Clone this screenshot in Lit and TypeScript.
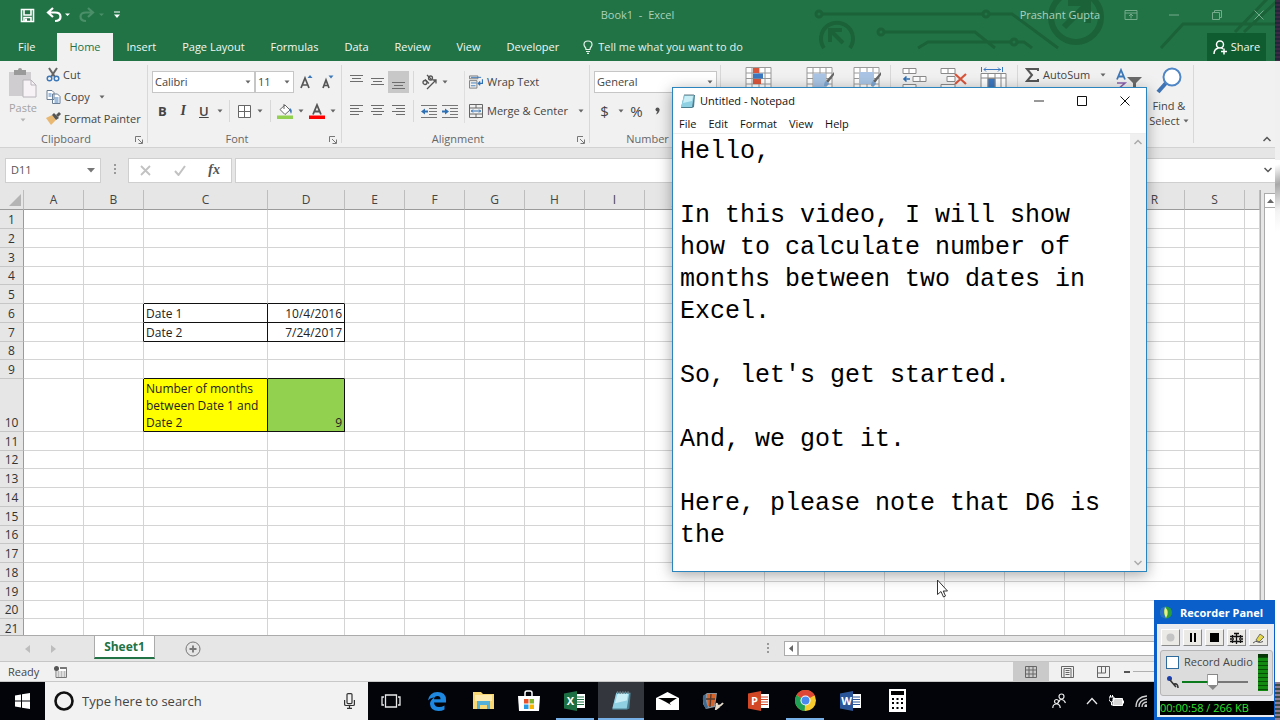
import { LitElement, html, css, svg, nothing } from "lit";
import { customElement } from "lit/decorators.js";
import { classMap } from "lit/directives/class-map.js";

const base = css`
  *, *::before, *::after { box-sizing: border-box; }
  :host { font-family: "Open Sans", "Noto Sans", sans-serif; font-size: 11px; line-height: 16px; color: #444; }
  button, input, select, textarea { font: inherit; color: inherit; border: 0; background: none; padding: 0; margin: 0; outline: 0; border-radius: 0; }
  button { display: inline-flex; align-items: center; justify-content: center; white-space: nowrap; }
  select { appearance: none; }
  svg { display: block; flex: none; }
`;

const caret = (c = "#666") => html`<svg width="6" height="4" viewBox="0 0 6 4"><path d="M0.5 0.5h5L3 3.6z" fill=${c} /></svg>`;

/* ---------- title bar and ribbon tabs ---------- */

@customElement("excel-header")
class ExcelHeader extends LitElement {
  static styles = [base, css`
    :host { display: block; position: relative; background: #217346; height: 61px; color: #f2f8f4; overflow: hidden; }
    .art { position: absolute; top: 0; right: 0; }
    .bar { display: grid; grid-template-columns: 1fr auto 1fr; height: 30px; align-items: center; position: relative; color: #a9d2ba; }
    .quick { display: flex; align-items: center; padding-left: 20px; gap: 8px; }
    .win { display: flex; justify-content: flex-end; align-items: center; }
    .win button { width: 43px; height: 28px; color: #74ab8b; }
    .win .close { width: 37px; padding-left: 5px; }
    .user { margin-right: 9px; }
    .tabs { display: flex; align-items: stretch; position: relative; height: 31px; padding: 3px 9px 0 5px; }
    .tab { padding: 0 13px; }
    .tab.file { padding: 0 22px 0 13px; }
    .tab.on { background: #f1f1f1; color: #217346; padding: 0 12px; margin-right: 1px; }
    .tell { display: flex; align-items: center; gap: 5px; flex: 1; margin-left: 11px; }
    .tell input { width: 180px; }
    .tell input::placeholder { color: #e4f2ea; opacity: 1; }
    .share { width: 59px; background: #0e5c2f; gap: 4px; }
  `];
  render() {
    return html`
      <svg class="art" width="480" height="50" viewBox="795 0 480 50" fill="none" stroke="#1b6239" stroke-width="3">
        <circle cx="819" cy="14" r="3" /><path d="M823 14H982M990 14h22l46 34" /><circle cx="986" cy="14" r="3" />
        <circle cx="881" cy="32" r="3" /><path d="M885 32h90l20 16M918 48l10-6h82M1018 42h6l8 6" /><circle cx="1014" cy="42" r="3" />
        <path d="M824 48a16 16 0 1 1 26 0" stroke-width="4" /><path d="M843 43L831 31M830 42V30h12" stroke-width="4" />
        <circle cx="1076" cy="17" r="25" stroke-width="6" /><path d="M1064 27l22-22M1068 3h20v20" stroke-width="6" />
        <path d="M1161 48l22-24h92M1235 32l33-34M1244 32l32-30" />
      </svg>
      <div class="bar">
        <div class="quick">
          <button aria-label="Save"><svg width="15" height="15" viewBox="0 0 15 15" fill="none" stroke="#fff" stroke-width="1.6"><path d="M1.5 1.5h12v12h-12zM4 2v5h7V2M4 13.5v-4h7v4" /><path d="M5 12h2" stroke-width="3"/></svg></button>
          <button aria-label="Undo"><svg width="28" height="16" viewBox="0 0 28 16"><path d="M10 1L5 5.5l5 4.500M5.500 5.500H12q5.500 0 5.500 4.300Q17.500 14 12 14" fill="none" stroke="#fff" stroke-width="2.200"/><path d="M22 6.500h5L24.500 9z" fill="#fff"/></svg></button>
          <button aria-label="Redo"><svg width="26" height="16" viewBox="0 0 26 16"><path d="M9 1l5 4.500L9 10M13.500 5.500H7Q1.500 5.500 1.500 9.800 1.500 14 7 14" fill="none" stroke="#4b8f69" stroke-width="2.200"/><path d="M20 6.500h5L22.500 9z" fill="#4b8f69"/></svg></button>
          <button aria-label="Customize toolbar"><svg width="8" height="8" viewBox="0 0 8 8"><path d="M1 1h6" stroke="#fff" /><path d="M1 3.500h6L4 7z" fill="#fff"/></svg></button>
        </div>
        <div>Book1 &nbsp;- &nbsp;Excel</div>
        <div class="win">
          <span class="user">Prashant Gupta</span>
          <button aria-label="Ribbon display options"><svg width="14" height="11" viewBox="0 0 14 11" fill="none" stroke="currentColor"><path d="M1 .5h12v9H1zM1 3h12M7 8.500V4.500M5 6l2-2 2 2" /></svg></button>
          <button aria-label="Minimize"><svg width="10" height="2"><path d="M0 1h10" stroke="currentColor"/></svg></button>
          <button aria-label="Restore"><svg width="10" height="10" viewBox="0 0 10 10" fill="none" stroke="currentColor"><path d="M.5 2.500h7v7h-7zM2.500 2.500v-2h7v7h-2"/></svg></button>
          <button class="close" aria-label="Close"><svg width="10" height="10" viewBox="0 0 10 10" stroke="currentColor"><path d="M.5.5l9 9m0-9l-9 9"/></svg></button>
        </div>
      </div>
      <div class="tabs">
        <button class="tab file">File</button>
        <button class="tab on">Home</button>
        ${["Insert", "Page Layout", "Formulas", "Data", "Review", "View", "Developer"].map((t) => html`<button class="tab">${t}</button>`)}
        <label class="tell">
          <svg width="10" height="14" viewBox="0 0 10 14" fill="none" stroke="#e4f2ea" stroke-width="1.200"><path d="M3 9.500Q3 8 2 7 1 6 1 4.600 1 1 5 1t4 3.600Q9 6 8 7 7 8 7 9.500zM3 11.500h4M4 13.300h2" /></svg>
          <input placeholder="Tell me what you want to do" aria-label="Tell me what you want to do" />
        </label>
        <button class="share"><svg width="14" height="15" viewBox="0 0 14 15" fill="none" stroke="#fff" stroke-width="1.500"><circle cx="7" cy="4.500" r="3.500"/><path d="M1 14q0-5 4.500-6M8.500 8l1.500 1M11 8.500v6M8 11.500h6"/></svg>Share</button>
      </div>`;
  }
}

/* ---------- ribbon ---------- */

const bars = (y: number[], w: number[], mode: string) => svg`${y.map((v, i) => {
  const x = mode === "l" ? 1 : mode === "r" ? 14 - w[i] : 7.5 - w[i] / 2;
  return svg`<path d=${`M${x} ${v}h${w[i]}`} stroke="#6d6d6d"/>`;
})}`;
const lines = (y: number[], w: number[], mode = "c") => html`<svg width="15" height="16" viewBox="0 0 15 16">${bars(y, w, mode)}</svg>`;
const tableIcon = (inner: unknown) => html`<svg width="28" height="24" viewBox="0 0 28 24"><path d="M1 1.500h25v21H1zM1 7h25M1 12.500h25M1 18h25M7 1v21M14 1v21M20 1v21" fill="#fff" stroke="#9a9a9a"/>${inner}</svg>`;
const brush = svg`<path d="M28 6l-8 9 2 2 6-8z" fill="#666"/><path d="M20 15q-2 1-2 5 4 1 5-3z" fill="#7fa6cf"/>`;

@customElement("excel-ribbon")
class ExcelRibbon extends LitElement {
  static styles = [base, css`
    :host { display: flex; height: 87px; background: #f1f1f1; border-bottom: 1px solid #d2d2d2; overflow: hidden; }
    .group { position: relative; flex: none; display: flex; flex-direction: column; }
    .group::after { content: ""; position: absolute; right: 0; top: 4px; bottom: 4px; border-right: 1px solid #d8d8d8; }
    .clip { width: 148px; } .font { width: 194px; } .align { width: 248px; } .num { width: 131px; }
    .styles { width: 170px; } .cells { width: 127px; } .edit { width: 176px; }
    .label { display: flex; justify-content: center; align-items: center; margin-top: auto; padding-right: 16px; color: #666; position: relative; }
    .label svg { position: absolute; right: 4px; top: 5px; }
    .grow { flex: 1; display: flex; justify-content: flex-end; align-items: flex-end; padding: 0 4px 5px; }
    .cols { display: flex; }
    .paste { flex-direction: column; justify-content: flex-start; width: 46px; padding-top: 7px; color: #a3a3a3; gap: 2px; }
    .stack { display: flex; flex-direction: column; gap: 1px; padding-top: 3px; align-items: flex-start; }
    .stack button { height: 21px; gap: 3px; }
    .rows { display: flex; flex-direction: column; gap: 7px; padding: 10px 4px 0; }
    .row { display: flex; height: 22px; align-items: center; }
    .ib { width: 21px; height: 22px; }
    .ar { width: 11px; height: 22px; }
    .on { background: #c8c8c8; }
    .sep { width: 1px; height: 22px; background: #d8d8d8; margin: 0 4px; }
    .tall { width: 1px; background: #dedede; margin-top: 10px; height: 52px; }
    .combo { position: relative; height: 22px; border: 1px solid #c6c6c6; background: #fff; display: flex; align-items: center; }
    .combo select { width: 100%; height: 20px; padding-left: 2px; }
    .combo svg { position: absolute; right: 3px; top: 8px; pointer-events: none; }
    .face { width: 104px; } .size { width: 40px; margin-right: 2px; } .fmt { width: 124px; }
    .txt { height: 22px; gap: 4px; justify-content: flex-start; }
    .b { font-weight: 700; font-size: 13px; color: #444; }
    .i { font-style: italic; font-weight: 700; font-family: "Liberation Serif", serif; font-size: 14px; }
    .u { text-decoration: underline; font-weight: 600; font-size: 13px; }
    .sym { font-size: 15px; }
    .tops { display: flex; padding: 5px 0 0; align-items: flex-start; }
    .tops.s { padding-left: 24px; gap: 19px; }
    .tops .first { margin-right: 14px; }
    .tops.c { padding-left: 10px; gap: 12px; }
    .autosum { gap: 4px; height: 20px; }
    .editing { display: flex; align-items: flex-start; padding: 4px 0 0 7px; }
    .sort { margin: 3px 0 0 8px; width: 30px; }
    .find { flex-direction: column; width: 50px; padding-top: 2px; }
    .find svg { margin-bottom: 3px; }
    .find span { display: flex; align-items: center; gap: 3px; line-height: 15px; }
    .find span svg { margin: 0; }
  `];
  launcher = html`<svg width="9" height="9" viewBox="0 0 9 9" fill="none" stroke="#777"><path d="M.5 6V.5H6M3 3l4 4M7.500 3.500v4h-4"/></svg>`;
  ar() { return html`<button class="ar" aria-label="More">${caret()}</button>`; }
  render() {
    return html`
      <section class="group clip">
        <div class="cols">
          <button class="paste">
            <svg width="28" height="30" viewBox="0 0 28 30"><path d="M0 4h22v24H0z" fill="#cfcdd0"/><path d="M5 2h12v5H5z" fill="#9a9a9a"/><circle cx="11" cy="2" r="2" fill="#9a9a9a"/><path d="M14 12h8l5 5v12H14z" fill="#f6f2f6" stroke="#b9b4ba"/><path d="M22 12v5h5" fill="none" stroke="#b9b4ba"/></svg>
            Paste ${caret("#b5b5b5")}
          </button>
          <div class="stack">
            <button><svg width="14" height="15" viewBox="0 0 14 15" fill="none"><path d="M3 1l6 9M11 1L5 10" stroke="#666" stroke-width="2"/><circle cx="3.500" cy="11.500" r="2.300" stroke="#3c78b8" stroke-width="1.400"/><circle cx="10.500" cy="11.500" r="2.300" stroke="#3c78b8" stroke-width="1.400"/></svg>Cut</button>
            <button><svg width="15" height="14" viewBox="0 0 15 14" fill="#fff" stroke="#6a7f95"><path d="M1 .5h5l2 2v7H1zM6.500 4h5l2.500 2.500v7H6.500z"/><path d="M2.500 4h3M2.500 6h3M8.500 8h4M8.500 10h4M8.500 12h4" stroke="#3c78b8"/></svg>Copy &nbsp; ${caret()}</button>
            <button><svg width="15" height="13" viewBox="0 0 15 13"><path d="M0 6l6-3 4 5-5 5z" fill="#e9b872"/><path d="M6 3l2-2 5 5-3 2z" fill="#555"/><path d="M10 3l3-3 2 2-3 3z" fill="#555"/></svg>Format Painter</button>
          </div>
        </div>
        <div class="label">Clipboard ${this.launcher}</div>
      </section>

      <section class="group font">
        <div class="rows">
          <div class="row">
            <span class="combo face"><select aria-label="Font"><option>Calibri</option></select>${caret()}</span>
            <span class="combo size"><select aria-label="Font size"><option>11</option></select>${caret()}</span>
            <button class="ib" aria-label="Increase font size"><svg width="15" height="16" viewBox="0 0 15 16"><path d="M2 14L6 4l4 10M3.500 11h5" fill="none" stroke="#555" stroke-width="1.700"/><path d="M8.500 4h5L11 1z" fill="#3c78b8"/></svg></button>
            <button class="ib" aria-label="Decrease font size"><svg width="15" height="16" viewBox="0 0 15 16"><path d="M3 14l3-8 3 8M4 11.500h4" fill="none" stroke="#555" stroke-width="1.700"/><path d="M8.500 1.500h5L11 4.500z" fill="#3c78b8"/></svg></button>
          </div>
          <div class="row">
            <button class="ib b">B</button><button class="ib i">I</button><button class="ib u">U</button>${this.ar()}<span class="sep"></span>
            <button class="ib" aria-label="Borders"><svg width="13" height="13" viewBox="0 0 13 13" fill="#fff" stroke="#666"><path d="M.5.5h12v12H.5zM6.500 0v13M0 6.500h13"/></svg></button>${this.ar()}<span class="sep"></span>
            <button class="ib" aria-label="Fill colour"><svg width="16" height="16" viewBox="0 0 16 16"><path d="M3 6.500L8 2l5 5-5 4.500z" fill="#fff" stroke="#666"/><path d="M7 1v5" stroke="#666"/><path d="M13 5q3 2 1 6-1-3-2-4z" fill="#3c78b8"/><path d="M0 12.500h16V16H0z" fill="#92d050"/></svg></button>${this.ar()}
            <button class="ib" aria-label="Font colour"><svg width="16" height="16" viewBox="0 0 16 16"><path d="M4 11.500L8 2l4 9.500M5.500 8.500h5" fill="none" stroke="#555" stroke-width="1.800"/><path d="M0 12.500h16V16H0z" fill="#f00"/></svg></button>${this.ar()}
          </div>
        </div>
        <div class="label">Font ${this.launcher}</div>
      </section>

      <section class="group align">
        <div class="cols">
          <div class="rows">
            <div class="row">
              <button class="ib" aria-label="Top align">${lines([1.5, 4.5, 7.5], [13, 9, 13])}</button>
              <button class="ib" aria-label="Middle align">${lines([4.5, 7.5, 10.5], [13, 9, 13])}</button>
              <button class="ib on" aria-label="Bottom align">${lines([8.5, 11.5, 14.5], [13, 9, 13])}</button><span class="sep"></span>
              <button class="ib" aria-label="Orientation"><svg width="16" height="16" viewBox="0 0 16 16" fill="none" stroke="#555" stroke-width="1.300"><path d="M6 15L15 6M11.500 6H15v3.500" /><circle cx="4" cy="8.500" r="2"/><path d="M4 5.500l4 4M6 1l5 5"/><circle cx="9.500" cy="4" r="2"/></svg></button>${this.ar()}
            </div>
            <div class="row">
              <button class="ib" aria-label="Align left">${lines([2.5, 5.5, 8.5, 11.5], [13, 9, 13, 9], "l")}</button>
              <button class="ib" aria-label="Center">${lines([2.5, 5.5, 8.5, 11.5], [13, 9, 13, 9])}</button>
              <button class="ib" aria-label="Align right">${lines([2.5, 5.5, 8.5, 11.5], [13, 9, 13, 9], "r")}</button><span class="sep"></span>
              <button class="ib" aria-label="Decrease indent"><svg width="16" height="13" viewBox="0 0 16 13"><path d="M0 .5h16M8 3.500h8M8 6.500h8M8 9.500h8M0 12.500h16" stroke="#777"/><path d="M0 6.500l4-3v2h3v2H4v2z" fill="#2f6fb3"/></svg></button>
              <button class="ib" aria-label="Increase indent"><svg width="16" height="13" viewBox="0 0 16 13"><path d="M0 .5h16M8 3.500h8M8 6.500h8M8 9.500h8M0 12.500h16" stroke="#777"/><path d="M7 6.500l-4-3v2H0v2h3v2z" fill="#2f6fb3"/></svg></button>
            </div>
          </div>
          <span class="tall"></span>
          <div class="rows">
            <button class="txt"><svg width="14" height="15" viewBox="0 0 15 15" fill="none"><path d="M.5.500h9v3h-9zM.500 5.500h8v8h-8z" stroke="#7a7a7a"/><path d="M2 2h11M2 8h6M2 11h5" stroke="#3c78b8"/><path d="M14.500 4v4.500H10M12 6.500l-2 2 2 2" stroke="#2f6fb3" stroke-width="1.400"/></svg>Wrap Text</button>
            <button class="txt"><svg width="14" height="14" viewBox="0 0 14 14" fill="none"><path d="M.5.500h13v13H.5zM.500 4h13M.500 10h13M7 .5V4M7 10v3.500" stroke="#666"/><path d="M2 7h10M4 5.500L2.500 7 4 8.500M10 5.500L11.500 7 10 8.500" stroke="#2f6fb3"/></svg>Merge &amp; Center &nbsp;${caret()}</button>
          </div>
        </div>
        <div class="label">Alignment ${this.launcher}</div>
      </section>

      <section class="group num">
        <div class="rows">
          <div class="row"><span class="combo fmt"><select aria-label="Number format"><option>General</option></select>${caret()}</span></div>
          <div class="row"><button class="ib sym">$</button>${this.ar()}<button class="ib sym">%</button><button class="ib sym" aria-label="Comma style"><svg width="5" height="8" viewBox="0 0 5 8"><circle cx="2.500" cy="2.500" r="2" fill="#555"/><path d="M4.500 2.500Q4.500 6 1 7.500L3 3z" fill="#555"/></svg></button></div>
        </div>
        <div class="label">Number</div>
      </section>

      <section class="group styles">
        <div class="tops s">
          <button class="first" aria-label="Conditional formatting">${tableIcon(svg`<path d="M8 2h6v5H8zM8 13h8v5H8z" fill="#d9553b"/><path d="M8 7.500h10v5H8z" fill="#3c78c0"/>`)}</button>
          <button aria-label="Format as table">${tableIcon(svg`<path d="M7 7.500h13v14H7z" fill="#a9c4e4"/>${brush}`)}</button>
          <button aria-label="Cell styles">${tableIcon(svg`<path d="M6 6h15v12H6z" fill="#a9c4e4"/>${brush}`)}</button>
        </div>
      </section>

      <section class="group cells">
        <div class="tops c">
          <button aria-label="Insert cells"><svg width="27" height="24" viewBox="0 0 27 24" fill="#fff" stroke="#8a8a8a"><path d="M2 2.500h13v5H2zM8 2.500v5M12 10.500h13v5H12zM19 10.500v5M2 18.500h13v5H2z"/><path d="M9 13H3M5.500 10.500L3 13l2.500 2.500" stroke="#2f6fb3" stroke-width="1.600" fill="none"/></svg></button>
          <button aria-label="Delete cells"><svg width="28" height="24" viewBox="0 0 28 24" fill="#fff" stroke="#8a8a8a"><path d="M1 2.500h14v5H1zM8 2.500v5M7 10.500h8v5H7zM1 18.500h14v5H1z"/><path d="M15 8l11 10M26 8L15 18" stroke="#d9553b" stroke-width="2.200"/></svg></button>
          <button aria-label="Format cells"><svg width="27" height="24" viewBox="0 0 27 24" fill="#fff" stroke="#8a8a8a"><path d="M1 7.500h25v16H1zM1 12h25M8 7.500v16M15 7.500v16M21 7.500v16"/><path d="M8 12.500h7v11H8z" fill="#3c78c0"/><path d="M1.500 1v5M22.500 1v5M4 3.500h17M6 1.500l-2 2 2 2M18 1.500l2 2-2 2" stroke="#3c78c0" fill="none"/></svg></button>
        </div>
      </section>

      <section class="group edit">
        <div class="editing">
          <button class="autosum"><svg width="14" height="14" viewBox="0 0 14 14"><path d="M13 3V1H2l5 6-5 6h11v-2" fill="none" stroke="#555" stroke-width="2"/></svg>AutoSum &nbsp;${caret()}</button>
          <button class="sort" aria-label="Sort and filter"><svg width="28" height="22" viewBox="0 0 28 22"><path d="M2 11.500L6 2l4 9.500M3.500 8.500h5" fill="none" stroke="#3c78b8" stroke-width="1.800"/><path d="M2 15h8l-8 7" fill="none" stroke="#8a5fae" stroke-width="1.600"/><path d="M12 9h15l-6 6v6h-3v-6z" fill="#6a6a6a"/></svg></button>
          <button class="find"><svg width="26" height="28" viewBox="0 0 26 28" fill="none"><path d="M10 16L2 25" stroke="#3e74b5" stroke-width="4"/><circle cx="16" cy="10" r="8.500" fill="#fff" stroke="#4f86c6" stroke-width="2"/></svg>
            <span>Find &amp;</span><span>Select ${caret()}</span></button>
        </div>
      </section>
      <div class="grow"><button aria-label="Collapse ribbon"><svg width="8" height="6" viewBox="0 0 8 6"><path d="M.5 5L4 1.500 7.500 5" fill="none" stroke="#555" stroke-width="1.500"/></svg></button></div>`;
  }
}

/* ---------- formula bar, grid, sheet tabs ---------- */

const COLS: [string, string][] = [["A", "n"], ["B", "n"], ["C", "wide"], ["D", "mid"], ..."EFGHIJKLMNOPQRS".split("").map((c) => [c, "n"] as [string, string]), ["", "rest"]];
const CELLS: Record<string, { v?: string; cls: string }> = {
  C5: { cls: "db" }, D5: { cls: "db" }, B6: { cls: "dr" }, B7: { cls: "dr" },
  C6: { v: "Date 1", cls: "db dr" }, D6: { v: "10/4/2016", cls: "db dr num" },
  C7: { v: "Date 2", cls: "db dr" }, D7: { v: "7/24/2017", cls: "db dr num" },
  C9: { cls: "db" }, D9: { cls: "db" }, B10: { cls: "dr" },
  C10: { v: "Number of months between Date 1 and Date 2", cls: "db dr yellow" }, D10: { v: "9", cls: "db dr num green" },
};

@customElement("excel-sheet")
class ExcelSheet extends LitElement {
  static styles = [base, css`
    :host { display: flex; flex-direction: column; flex: 1; min-height: 0; background: #e6e6e6; }
    .fbar { display: flex; align-items: center; height: 42px; padding: 2px 0 0 5px; color: #555; flex: none; }
    .box { height: 25px; background: #fff; border: 1px solid #cfcfcf; display: flex; align-items: center; }
    .name { width: 96px; padding: 0 5px; }
    .name input { flex: 1; min-width: 0; }
    .dots { width: 27px; display: flex; justify-content: center; }
    .acts { width: 104px; justify-content: space-between; padding: 0 11px; margin-right: 3px; }
    .acts i { font: italic 700 14px "Liberation Serif", serif; }
    .formula { flex: 1; border-right: 0; padding-right: 3px; }
    .formula input { flex: 1; }
    .area { flex: 1; min-height: 0; display: flex; overflow: hidden; }
    .view { flex: 1; min-width: 0; overflow: hidden; border-right: 1px solid #ababab; }
    table { table-layout: fixed; width: 100%; border-collapse: separate; border-spacing: 0; font-size: 12px; color: #222; }
    .hd { width: 24px; } .n { width: 60px; } .wide { width: 124px; } .mid { width: 77px; }
    thead th { height: 20px; background: #e6e6e6; border-right: 1px solid #bdbdbd; border-bottom: 1px solid #9b9b9b; font-weight: 400; padding: 0; font-size: 12px; line-height: 18px; color: #444; }
    .corner { padding: 0 0 0 9px; }
    tbody th { background: #e6e6e6; border-right: 1px solid #9b9b9b; border-bottom: 1px solid #c6c6c6; font-weight: 400; padding: 0; vertical-align: bottom; line-height: 16px; color: #333; }
    td { background: #fff; border-right: 1px solid #d4d4d4; border-bottom: 1px solid #d4d4d4; padding: 0 2px; vertical-align: bottom; line-height: 16px; }
    tr.r19 { height: 19px; } tr.r18 { height: 18px; } tr.r53 { height: 53px; }
    tr.r53 td { line-height: 17px; }
    .db { border-bottom-color: #111; } .dr { border-right-color: #111; }
    .num { text-align: right; }
    td.yellow { background: #ff0; } td.green { background: #92d050; }
    .vs { width: 14px; padding: 3px 0 0 3px; display: flex; flex-direction: column; flex: none; }
    .vs button { height: 15px; border: 1px solid #ababab; border-right: 0; background: #fff; }
    .vs div { flex: 1; background: #fff; border-left: 1px solid #ababab; }
    .tabs { height: 27px; flex: none; display: flex; border-top: 1px solid #ababab; border-bottom: 1px solid #c6c6c6; }
    .nav { width: 94px; padding-right: 14px; display: flex; align-items: center; justify-content: center; gap: 21px; }
    .sheet { width: 61px; height: 23px; background: #fff; border: solid #ababab; border-width: 0 1px; border-bottom: 2px solid #217346; color: #217346; font-weight: 700; font-size: 12px; }
    .add { margin-left: 30px; }
    .sp { flex: 1; }
    .hs { width: 491px; display: flex; align-items: center; }
    .hs button { width: 14px; height: 15px; border: 1px solid #ababab; background: #fff; }
    .hs div { flex: 1; height: 15px; border: 1px solid #ababab; border-right: 0; background: #fff; }
    .hdots { width: 30px; display: flex; justify-content: center; padding-right: 2px; align-items: center; }
    .status { height: 20px; flex: none; background: #f1f1f1; display: flex; align-items: center; padding-left: 8px; border-bottom: 1px solid #c8c8c8; }
    .status > svg { margin-left: 15px; }
    .views { display: flex; height: 19px; width: 262px; align-items: center; }
    .views button { width: 36px; height: 19px; }
    .views .on { background: #cacaca; }
    .zoom { flex: 1; height: 1px; background: #b0b0b0; }
    .views .minus { width: 12px; }
  `];
  dots = html`<svg width="2" height="12" viewBox="0 0 2 12" fill="#999"><path d="M0 0h2v2H0zM0 4h2v2H0zM0 8h2v2H0z"/></svg>`;
  row(r: number) {
    const h = r === 10 ? "r53" : r % 4 === 0 ? "r18" : "r19";
    return html`<tr class=${h}><th scope="row">${r}</th>${COLS.map(([c]) => {
      const cell = CELLS[c + r];
      return html`<td class=${cell ? cell.cls : nothing}>${cell?.v ?? ""}</td>`;
    })}</tr>`;
  }
  render() {
    return html`
      <div class="fbar">
        <div class="box name"><input aria-label="Name box" value="D11" /><svg width="8" height="5" viewBox="0 0 8 5"><path d="M0 0h8L4 4.500z" fill="#777"/></svg></div>
        <div class="dots">${this.dots}</div>
        <div class="box acts">
          <button aria-label="Cancel"><svg width="11" height="11" viewBox="0 0 11 11"><path d="M1 1l9 9m0-9l-9 9" stroke="#c2c2c2" stroke-width="1.800"/></svg></button>
          <button aria-label="Enter"><svg width="12" height="11" viewBox="0 0 12 11"><path d="M1 6l3.500 4L11 1" fill="none" stroke="#c2c2c2" stroke-width="2"/></svg></button>
          <button aria-label="Insert function"><i>fx</i></button>
        </div>
        <div class="box formula"><input aria-label="Formula bar" /><button aria-label="Expand formula bar"><svg width="8" height="6" viewBox="0 0 8 6"><path d="M.5 1L4 4.500 7.500 1" fill="none" stroke="#555" stroke-width="1.500"/></svg></button></div>
      </div>
      <div class="area">
        <div class="view">
          <table>
            <colgroup><col class="hd" />${COLS.map(([, k]) => html`<col class=${k} />`)}</colgroup>
            <thead><tr><th class="corner"><svg width="12" height="12"><path d="M12 0v12H0z" fill="#b4b4b4"/></svg></th>${COLS.map(([c]) => html`<th scope="col">${c}</th>`)}</tr></thead>
            <tbody>${Array.from({ length: 21 }, (_, i) => this.row(i + 1))}</tbody>
          </table>
        </div>
        <div class="vs"><button aria-label="Scroll up"><svg width="7" height="4"><path d="M0 4h7L3.500 0z" fill="#666"/></svg></button><div></div></div>
      </div>
      <div class="tabs">
        <div class="nav"><svg width="5" height="8"><path d="M5 0v8L0 4z" fill="#bdbdbd"/></svg><svg width="5" height="8"><path d="M0 0v8l5-4z" fill="#bdbdbd"/></svg></div>
        <button class="sheet">Sheet1</button>
        <button class="add" aria-label="New sheet"><svg width="16" height="16" viewBox="0 0 16 16" fill="none" stroke="#777"><circle cx="8" cy="8" r="7"/><path d="M8 4.500v7M4.500 8h7" stroke-width="1.800"/></svg></button>
        <span class="sp"></span><div class="hdots">${this.dots}</div>
        <div class="hs"><button aria-label="Scroll left"><svg width="4" height="7"><path d="M4 0v7L0 3.500z" fill="#666"/></svg></button><div></div></div>
      </div>
      <div class="status">
        <span>Ready</span>
        <svg width="13" height="12" viewBox="0 0 13 12"><path d="M2 4.500v7h10.500V1.500H6" fill="#fff" stroke="#777"/><path d="M6 1h6.500v2H6z" fill="#777"/><path d="M3.500 6h8M3.500 8h8M3.500 10h8" stroke="#777" stroke-dasharray="2 1"/><circle cx="2.500" cy="2.500" r="2.500" fill="#555"/></svg>
        <span class="sp"></span>
        <div class="views">
          <button class="on" aria-label="Normal view"><svg width="12" height="12" viewBox="0 0 12 12" fill="none" stroke="#666"><path d="M.5.5h11v11H.5zM.5 4h11M.5 8h11M4 .5v11M8 .5v11"/></svg></button>
          <button aria-label="Page layout view"><svg width="13" height="12" viewBox="0 0 13 12" fill="none" stroke="#666"><path d="M.5.500h12v11H.5zM3 2.500h7v9H3zM4.500 4.500h4M4.500 6.500h4M4.500 8.500h4"/></svg></button>
          <button aria-label="Page break view"><svg width="13" height="12" viewBox="0 0 13 12" fill="none" stroke="#666"><path d="M.5.500h12v11H.5zM.500 7h8V.500M4.500 .500V7"/></svg></button>
          <button class="minus" aria-label="Zoom out"><svg width="6" height="2"><path d="M0 1h6" stroke="#555" stroke-width="2"/></svg></button><div class="zoom"></div>
        </div>
      </div>`;
  }
}

/* ---------- notepad window ---------- */

const NOTE = `Hello,

In this video, I will show
how to calculate number of
months between two dates in
Excel.

So, let's get started.

And, we got it.

Here, please note that D6 is
the`;

const noteGlyph = (w: number, h: number) => html`<svg width=${w} height=${h} viewBox="0 0 16 16"><path d="M4 2h11l-1 12-2 1H1z" fill="#4b7e8f"/><path d="M4 2h10l-2 12H1z" fill="#8fd0e2"/><path d="M5 3h8l-1 5-9 2z" fill="#c9eef6"/><path d="M5 1v2M7 1v2M9 1v2M11 1v2M13 1v2" stroke="#6b7c84"/></svg>`;

@customElement("notepad-window")
class NotepadWindow extends LitElement {
  static styles = [base, css`
    :host { display: flex; flex-direction: column; background: #fff; border: 1px solid #2b84bd; box-shadow: 0 3px 14px rgba(0, 0, 0, 0.35); color: #111; }
    .title { display: flex; align-items: center; height: 26px; padding-left: 7px; flex: none; }
    .title span { flex: 1; padding-left: 4px; }
    .title button { width: 43px; height: 26px; }
    .menu { display: flex; height: 19px; flex: none; padding-left: 6px; gap: 12px; }
    .body { display: flex; flex: 1; min-height: 0; border-top: 1px solid #ececec; }
    textarea { flex: 1; min-width: 0; resize: none; overflow: hidden; padding: 2px 0 0 7px; font: 25px/32px "Liberation Mono", monospace; color: #000; white-space: pre; }
    .sb { width: 16px; background: #f0f0f0; display: flex; flex-direction: column; justify-content: space-between; align-items: center; padding: 5px 0; }
  `];
  render() {
    return html`
      <div class="title">${noteGlyph(16, 16)}<span>Untitled - Notepad</span>
        <button aria-label="Minimize"><svg width="10" height="2"><path d="M0 1h10" stroke="#333"/></svg></button>
        <button aria-label="Maximize"><svg width="10" height="10"><path d="M.5.5h9v9h-9z" fill="none" stroke="#111"/></svg></button>
        <button aria-label="Close"><svg width="10" height="10"><path d="M.5.5l9 9m0-9l-9 9" stroke="#111"/></svg></button>
      </div>
      <div class="menu">${["File", "Edit", "Format", "View", "Help"].map((m) => html`<button>${m}</button>`)}</div>
      <div class="body"><textarea aria-label="Text editor" spellcheck="false" .value=${NOTE}></textarea>
        <div class="sb"><svg width="8" height="6"><path d="M.5 5L4 1.500 7.500 5" fill="none" stroke="#a9a9a9" stroke-width="1.500"/></svg><svg width="8" height="6"><path d="M.5 1L4 4.500 7.500 1" fill="none" stroke="#a9a9a9" stroke-width="1.500"/></svg></div>
      </div>`;
  }
}

/* ---------- recorder panel ---------- */

@customElement("recorder-panel")
class RecorderPanel extends LitElement {
  static styles = [base, css`
    :host { display: flex; flex-direction: column; background: #e9ebf0; border: 3px solid #0a5fcb; border-top: 0; border-right-width: 1px; }
    .title { height: 24px; flex: none; margin: 0 -1px 0 -3px; background: #0a5fcb; display: flex; align-items: center; gap: 7px; padding-left: 6px; font: 700 11px "Open Sans", sans-serif; color: #fff; white-space: nowrap; }
    .btns { display: flex; gap: 3px; padding: 5px 4px 3px; }
    .btns button { width: 19px; height: 17px; background: #eceae6; border: 1px solid; border-color: #fff #8a8a8a #8a8a8a #fff; }
    .panel { background: #dcdcdc; border: 1px solid #b5b5b5; border-radius: 3px; margin: 1px 1px 0 3px; height: 46px; display: flex; padding: 3px 4px 2px 5px; gap: 4px; justify-content: space-between; }
    .left { display: flex; flex-direction: column; gap: 4px; }
    label { display: flex; align-items: center; gap: 5px; white-space: nowrap; }
    input[type="checkbox"] { appearance: none; width: 13px; height: 13px; border: 1px solid #2f6b9c; background: #fff; }
    .mic { display: flex; align-items: center; gap: 3px; }
    .mic input { appearance: none; width: 66px; height: 16px; background: linear-gradient(90deg, #0b7a1c 0 46%, #777 46%) center / 100% 2px no-repeat; }
    .mic input::-webkit-slider-thumb { appearance: none; width: 11px; height: 16px; background: linear-gradient(#fff, #fff) center 1px / 9px 10px no-repeat, #888; clip-path: polygon(0 0, 100% 0, 100% 65%, 50% 100%, 0 65%); }
    .meter { width: 10px; height: 37px; background: repeating-linear-gradient(#064d06 0 1px, #128a12 1px 4px); border-top: 3px solid #063506; }
    .time { margin: 5px 0 0 3px; height: 14px; background: #000; color: #2ee62e; line-height: 13px; white-space: nowrap; overflow: hidden; }
  `];
  render() {
    return html`
      <div class="title"><svg width="13" height="15" viewBox="0 0 13 15"><circle cx="6" cy="7.500" r="6" fill="#2a9c3c"/><path d="M6 1.500a6 6 0 0 0 0 12q-4-6 0-12z" fill="#2c6fd0"/><path d="M5 2q5 5 1 11-3-5-1-11z" fill="#e8f08a"/></svg>Recorder Panel</div>
      <div class="btns">
        <button aria-label="Record"><svg width="9" height="9"><circle cx="4.500" cy="4.500" r="4" fill="#c4c4c4"/></svg></button>
        <button aria-label="Pause"><svg width="6" height="9"><path d="M0 0h2v9H0zM4 0h2v9H4z"/></svg></button>
        <button aria-label="Stop"><svg width="9" height="9"><path d="M0 0h9v9H0z"/></svg></button>
        <button aria-label="Markers"><svg width="13" height="12" viewBox="0 0 13 12"><path d="M0 4.500h13M0 9.500h13M6.500 1v11M4 1.500h5M2.500 3v3M10.500 3v3M2.500 8v3M10.500 8v3M0 7h4M9 7h4" stroke="#111" stroke-width="1.300"/></svg></button>
        <button aria-label="Draw"><svg width="12" height="12" viewBox="0 0 12 12"><path d="M3 8l4-6 4 3-5 5z" fill="#e5d84a" stroke="#555" stroke-width=".8"/><path d="M0 11q3-3 5-1 2 1 5-.5" fill="none" stroke="#555"/></svg></button>
      </div>
      <div class="panel">
        <div class="left">
          <label><input type="checkbox" />Record Audio</label>
          <div class="mic"><svg width="13" height="14" viewBox="0 0 13 14"><circle cx="3.500" cy="3.500" r="2.500" fill="#1c3fae"/><path d="M4 5l6 7M8 9q4-1 4 4" stroke="#333" stroke-width="1.600" fill="none"/></svg>
            <input type="range" aria-label="Volume" min="0" max="100" value="46" /></div>
        </div>
        <div class="meter"></div>
      </div>
      <div class="time">00:00:58 / 266 KB</div>`;
  }
}

/* ---------- taskbar ---------- */

const office = (c: string, letter: string) => html`<svg width="22" height="20" viewBox="0 0 22 20"><path d="M11 3h10v14H11z" fill="#fff"/><path d="M13 6h7M13 8.500h7M13 11h7M13 13.500h7" stroke=${c}/><path d="M0 2.500L13 0v20L0 17.500z" fill=${c}/><text x="6.500" y="14" font-family="Open Sans, sans-serif" font-weight="700" font-size="11" text-anchor="middle" fill="#fff">${letter}</text></svg>`;

const APPS: { name: string; on?: boolean; run?: boolean; icon: unknown }[] = [
  { name: "Task view", icon: html`<svg width="20" height="14" viewBox="0 0 20 14" fill="none" stroke="#e8e8e8" stroke-width="1.300"><path d="M4.500 1h11v12h-11zM3 3H1v8h2M17 3h2v8h-2"/></svg>` },
  { name: "Edge", icon: html`<svg width="20" height="20" viewBox="0 0 20 20"><path d="M1 9.500Q2.500 1 10.500 1 19 1 19 9v2.500H7Q7.500 16 12 16q3 0 5.500-1.500v4Q15 20 11.500 20 3.500 20 3 13q0-4 4.500-6.500Q3.500 6.500 1 9.500zM7 8.300h6.500Q13.500 5 10.500 5 7.500 5 7 8.300z" fill="#1e88e0"/></svg>` },
  { name: "File Explorer", icon: html`<svg width="21" height="17" viewBox="0 0 21 17"><path d="M0 0h8l2 2h11v15H0z" fill="#f8d775"/><path d="M2 3h17v6H2z" fill="#fdebb0"/><path d="M4 9h13v8h-3v-4H7v4H4z" fill="#54b0d8"/></svg>` },
  { name: "Store", icon: html`<svg width="22" height="22" viewBox="0 0 22 22"><path d="M7 6V3q0-2 2-2h3q2 0 2 2v3" fill="none" stroke="#fff" stroke-width="1.500"/><path d="M0 6h22l-1 15H1z" fill="#fff"/><path d="M6 9h4.500v4.500H6z" fill="#e8532b"/><path d="M11.500 9H16v4.500h-4.500z" fill="#7cb62d"/><path d="M6 14.500h4.500V19H6z" fill="#2a9be0"/><path d="M11.500 14.500H16V19h-4.500z" fill="#f7b500"/></svg>` },
  { name: "Excel", run: true, icon: office("#1d7044", "X") },
  { name: "Notepad", on: true, run: true, icon: noteGlyph(21, 21) },
  { name: "Mail", icon: html`<svg width="23" height="18" viewBox="0 0 23 18"><path d="M0 6l11.500-6L23 6v12H0z" fill="#fff"/><path d="M2 6h19l-7.500 5 1.500 2-6-3.500z" fill="#000"/></svg>` },
  { name: "Movie Maker", icon: html`<svg width="22" height="19" viewBox="0 0 22 19"><path d="M1 5l4-3h10l-2 14-9 2-3-5z" fill="#8d949c"/><path d="M5 3h9l-2 12H6z" fill="#d9642a"/><path d="M9 3l-1 13M4 8h9" stroke="#5a3a2a" stroke-width="1.400"/><path d="M1 5q-1 7 3 13l2-2Q3 10 4 3z" fill="#406a90"/><path d="M14 13q3 4 7-1M15 12l-1 6 4-3" stroke="#e6dccc" stroke-width="2" fill="none"/></svg>` },
  { name: "PowerPoint", icon: office("#d24726", "P") },
  { name: "Chrome", run: true, icon: html`<svg width="21" height="21" viewBox="0 0 21 21"><circle cx="10.500" cy="10.500" r="10.500" fill="#f7cb2d"/><path d="M10.500 10.500L1.400 5.300A10.500 10.500 0 0 1 19.600 5.300z" fill="#de4635"/><path d="M10.500 10.500L1.400 5.300A10.500 10.500 0 0 0 9.500 21z" fill="#1fa055"/><path d="M10.500 5.300h9.200" stroke="#de4635" stroke-width="1"/><circle cx="10.500" cy="10.500" r="5" fill="#fff"/><circle cx="10.500" cy="10.500" r="4" fill="#4a8af0"/></svg>` },
  { name: "Word", icon: office("#2a5699", "W") },
  { name: "Calculator", icon: html`<svg width="17" height="23" viewBox="0 0 17 23"><path d="M0 0h17v23H0z" fill="#fff"/><path d="M2 2h13v4H2z"/><path d="M3 9h2v2H3zM7.500 9h2v2h-2zM12 9h2v2h-2zM3 13h2v2H3zM7.500 13h2v2h-2zM12 13h2v2h-2zM3 18h2v2H3zM7.500 18h2v2h-2zM12 18h2v2h-2z"/></svg>` },
];

@customElement("task-bar")
class TaskBar extends LitElement {
  static styles = [base, css`
    :host { display: flex; height: 38px; background: #02040a; flex: none; overflow: hidden; }
    .start { width: 45px; }
    .search { width: 323px; background: #f2f2f2; display: flex; align-items: center; padding: 0 13px 0 8px; gap: 7px; }
    .search input { flex: 1; min-width: 0; font-size: 13px; }
    .search input::placeholder { color: #444; opacity: 1; }
    .app { width: 46px; border-bottom: 2px solid transparent; padding-top: 1px; }
    .run { background: linear-gradient(#76b0e6, #76b0e6) bottom / 38px 2px no-repeat border-box; }
    .on { background: #33363c; border-bottom-color: #76b0e6; }
    .tray { display: flex; align-items: center; margin-left: auto; width: 228px; gap: 11px; padding-left: 5px; }
    .people { margin-right: 9px; }
  `];
  render() {
    return html`
      <button class="start" aria-label="Start"><svg width="15" height="16" viewBox="0 0 15 16" fill="#fff"><path d="M0 2.500l6-1V7.500H0zM7 1.300L15 0v7.500H7zM0 8.500h6v6l-6-1zM7 8.500h8V16l-8-1.300z"/></svg></button>
      <label class="search"><svg width="22" height="22"><circle cx="11" cy="11" r="8.500" fill="none" stroke="#111" stroke-width="2.600"/></svg><input placeholder="Type here to search" aria-label="Type here to search" />
        <svg width="11" height="16" viewBox="0 0 11 16" fill="none" stroke="#333" stroke-width="1.200"><rect x="3" y=".6" width="5" height="10" rx="1"/><path d="M.6 7v4.500q0 1 1.400 1h7q1.400 0 1.400-1V7M5.500 12.500V15M3 15.400h5"/></svg></label>
      ${APPS.map((a) => html`<button class=${classMap({ app: true, on: !!a.on, run: !!a.run && !a.on })} aria-label=${a.name}>${a.icon}</button>`)}
      <div class="tray">
        <svg class="people" width="14" height="16" viewBox="0 0 14 16" fill="none" stroke="#e8e8e8" stroke-width="1.200"><circle cx="9.500" cy="3.500" r="2.500"/><circle cx="4.500" cy="8.500" r="2"/><path d="M7 9q0-2.500 2.500-2.500T13.500 10M.8 15q0-4 3.700-4t3.700 4"/></svg>
        <svg width="12" height="8" viewBox="0 0 12 8"><path d="M1 7l5-5.500L11 7" fill="none" stroke="#e8e8e8" stroke-width="1.300"/></svg>
        <svg width="15" height="12" viewBox="0 0 15 12"><path d="M4 3.500h9.500v7H4z" fill="#d8d8d8" stroke="#fff"/><path d="M14 5.500h1v3h-1z" fill="#fff"/><path d="M0 2h5v3q-1 2-2.500 2T0 5zM1.500 0v2M3.500 0v2M2.500 7v3h2" fill="none" stroke="#fff"/></svg>
        <svg width="12" height="12" viewBox="0 0 12 12" fill="none" stroke="#d0d0d0" stroke-width="1.300"><path d="M1 12Q1 2 12 1M4 12q0-7 8-8M7 12q0-4.500 5-5"/><circle cx="11" cy="11" r="1" fill="#fff"/></svg>
      </div>`;
  }
}

/* ---------- page ---------- */

@customElement("app-root")
class AppRoot extends LitElement {
  static styles = [base, css`
    :host { display: flex; height: 100vh; overflow: hidden; position: relative; background: #000; }
    main { flex: 1; min-width: 0; display: flex; flex-direction: column; }
    excel-header, excel-ribbon { flex: none; }
    .edge { width: 5px; flex: none; display: flex; flex-direction: column; }
    .edge .dark { height: 61px; background: repeating-linear-gradient(#3b2b45 0 2px, #26243a 2px 4px); }
    .edge .light { height: 99px; background: #f0f0f0; }
    .edge .page { flex: 1; background: linear-gradient(165deg, #fff 5px, #a8a8a8 24px, #f4f4f4 50px, #fff 70px); }
    .edge .foot { height: 38px; background: repeating-linear-gradient(#8f7d92 0 2px, #3d4a46 2px 4px); }
    notepad-window { position: absolute; left: 672px; top: 87px; width: 475px; height: 485px; }
    recorder-panel { position: absolute; right: 5px; bottom: 0; width: 121px; height: 120px; }
    .cursor { position: absolute; left: 936px; top: 579px; }
  `];
  render() {
    return html`
      <main><excel-header></excel-header><excel-ribbon></excel-ribbon><excel-sheet></excel-sheet><task-bar></task-bar></main>
      <div class="edge"><div class="dark"></div><div class="light"></div><div class="page"></div><div class="foot"></div></div>
      <notepad-window></notepad-window>
      <svg class="cursor" width="13" height="20" viewBox="0 0 13 20"><path d="M1.500 1v14.500l3.500-3 2.500 5.500 2-1-2.300-5h4.300z" fill="#fff" stroke="#333"/></svg>
      <recorder-panel></recorder-panel>`;
  }
}
